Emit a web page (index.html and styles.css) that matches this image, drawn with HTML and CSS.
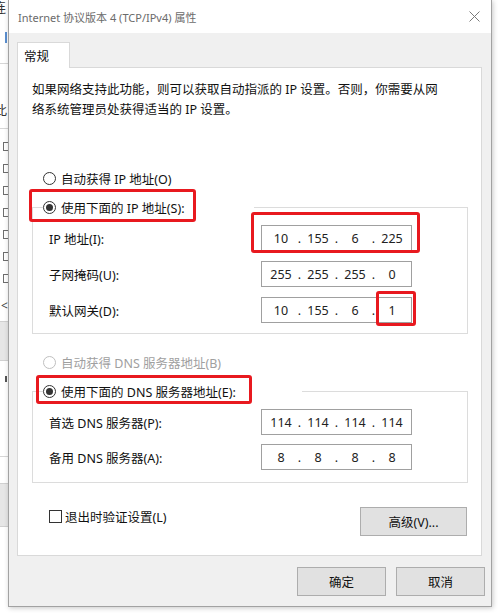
FILE: index.html
```html
<!DOCTYPE html>
<html lang="zh-CN">
<head>
<meta charset="utf-8">
<title>Internet 协议版本 4 (TCP/IPv4) 属性</title>
<link rel="stylesheet" href="styles.css">
</head>
<body>
<div class="bg-strip">
  <div class="s-glyph g1">连</div>
  <div class="s-blue"></div>
  <div class="s-line l1"></div>
  <div class="s-glyph g2">此</div>
  <div class="s-line l2"></div>
  <div class="s-check"></div>
  <div class="s-check"></div>
  <div class="s-check"></div>
  <div class="s-check"></div>
  <div class="s-check"></div>
  <div class="s-check"></div>
  <div class="s-check"></div>
  <div class="s-arrow">&lt;</div>
  <div class="s-gray g-a"></div>
  <div class="s-mark"></div>
  <div class="s-line l3"></div>
  <div class="s-gray g-b"></div>
</div>

<div class="dialog">
  <div class="titlebar">
    <span class="title">Internet 协议版本 4 (TCP/IPv4) 属性</span>
    <svg class="close" width="11" height="11" viewBox="0 0 11 11"><path d="M0.5 0.5 L10.5 10.5 M10.5 0.5 L0.5 10.5" stroke="#7a7a7a" stroke-width="1" fill="none"/></svg>
  </div>
  <div class="body">
    <div class="tab">常规</div>
    <div class="panel">
      <div class="desc">
        <span class="line">如果网络支持此功能，则可以获取自动指派的 IP 设置。否则，你需要从网</span>
        <span class="line">络系统管理员处获得适当的 IP 设置。</span>
      </div>

      <div class="radio-row first"><span class="radio"></span><span>自动获得 IP 地址(O)</span></div>

      <fieldset class="group">
        <legend class="legend ip-legend"><span class="radio-row"><span class="radio on"></span><span>使用下面的 IP 地址(S):</span></span></legend>
        <div class="fields">
          <span class="label">IP 地址(I):</span>
          <div class="ipbox"><span>10</span><span>.</span><span>155</span><span>.</span><span>6</span><span>.</span><span>225</span></div>
          <span class="label">子网掩码(U):</span>
          <div class="ipbox"><span>255</span><span>.</span><span>255</span><span>.</span><span>255</span><span>.</span><span>0</span></div>
          <span class="label">默认网关(D):</span>
          <div class="ipbox"><span>10</span><span>.</span><span>155</span><span>.</span><span>6</span><span>.</span><span>1</span></div>
        </div>
      </fieldset>

      <div class="radio-row dns-auto disabled"><span class="radio"></span><span>自动获得 DNS 服务器地址(B)</span></div>

      <fieldset class="group dns">
        <legend class="legend dns-legend"><span class="radio-row"><span class="radio on"></span><span>使用下面的 DNS 服务器地址(E):</span></span></legend>
        <div class="fields">
          <span class="label">首选 DNS 服务器(P):</span>
          <div class="ipbox"><span>114</span><span>.</span><span>114</span><span>.</span><span>114</span><span>.</span><span>114</span></div>
          <span class="label">备用 DNS 服务器(A):</span>
          <div class="ipbox"><span>8</span><span>.</span><span>8</span><span>.</span><span>8</span><span>.</span><span>8</span></div>
        </div>
      </fieldset>

      <div class="options">
        <label class="check-row"><span class="checkbox"></span><span>退出时验证设置(L)</span></label>
        <button class="btn adv">高级(V)...</button>
      </div>

      <div class="mark m1"></div>
      <div class="mark m2"></div>
      <div class="mark m3"></div>
      <div class="mark m4"></div>
    </div>
    <div class="footer">
      <button class="btn">确定</button>
      <button class="btn">取消</button>
    </div>
  </div>
</div>
</body>
</html>
```

FILE: styles.css
```css
html, body {
  margin: 0;
  padding: 0;
}
body {
  width: 500px;
  height: 614px;
  overflow: hidden;
  background: #ffffff;
  display: flex;
  align-items: flex-start;
  font-family: "Noto Sans", "Noto Sans CJK SC", sans-serif;
  font-size: 12.5px;
  color: #111111;
}

/* background window strip */
.bg-strip {
  width: 8px;
  height: 614px;
  flex: none;
  overflow: hidden;
  background: #ffffff;
  display: flex;
  flex-direction: column;
}
.s-glyph {
  height: 14px;
  line-height: 14px;
  font-size: 13px;
  margin-left: -7px;
  color: #333;
  white-space: nowrap;
}
.s-blue {
  width: 2px;
  height: 11px;
  margin: 18px 0 0 5px;
  background: #5b8fd0;
}
.s-line {
  height: 1px;
  background: #d6d6d6;
}
.l1 { margin-top: 20px; }
.g2 { margin-top: 39px; margin-left: -6px; }
.l2 { margin-top: 11px; }
.s-check {
  width: 5px;
  height: 7px;
  margin: 13px 0 0 3px;
  border: 1px solid #6d6d6d;
  border-right: none;
  flex: none;
}
.s-check:first-of-type { margin-top: 11px; }
.s-arrow {
  height: 14px;
  line-height: 14px;
  margin: 16px 0 0 1px;
  font-size: 12px;
  color: #444;
}
.s-gray {
  background: #e6e6e6;
  border-top: 1px solid #d0d0d0;
  border-bottom: 1px solid #d0d0d0;
}
.g-a { height: 38px; margin-top: 8px; }
.s-mark {
  width: 2px;
  height: 6px;
  margin: 15px 0 0 5px;
  background: #555;
}
.l3 { margin-top: 74px; }
.g-b { height: 42px; margin-top: 26px; }

/* dialog */
.dialog {
  width: 484px;
  height: 607px;
  flex: none;
  box-sizing: border-box;
  border: 1px solid #a2a2a2;
  border-top: none;
  background: #f0f0f0;
  box-shadow: 1px 1px 5px rgba(0, 0, 0, 0.22);
  display: flex;
  flex-direction: column;
  position: relative;
  z-index: 1;
}
.titlebar {
  height: 33px;
  flex: none;
  background: #ffffff;
  display: flex;
  align-items: center;
  justify-content: space-between;
  padding: 0 11px 0 9px;
}
.title {
  color: #6b6b6b;
  font-size: 11px;
  white-space: nowrap;
}
.close { display: block; }

.body {
  flex: 1;
  padding: 9px 6px 0 8px;
  display: flex;
  flex-direction: column;
}
.tab {
  width: 53px;
  height: 26px;
  box-sizing: border-box;
  border: 1px solid #d9d9d9;
  border-bottom: none;
  background: #ffffff;
  margin-bottom: -1px;
  padding-left: 6px;
  display: flex;
  align-items: center;
  position: relative;
  z-index: 2;
}
.panel {
  width: 465px;
  height: 489px;
  box-sizing: border-box;
  border: 1px solid #d9d9d9;
  background: #ffffff;
  padding: 12px 13px 0 14px;
  position: relative;
}
.desc .line {
  display: block;
  line-height: 20px;
  white-space: nowrap;
}

.radio-row {
  display: flex;
  align-items: center;
  gap: 5px;
  height: 20px;
  white-space: nowrap;
}
.radio-row.first { margin-top: 48px; padding-left: 11px; }
.radio-row.dns-auto { margin-top: 18px; padding-left: 11px; }
.disabled { color: #a0a0a0; }
.radio {
  width: 13px;
  height: 13px;
  box-sizing: border-box;
  border: 1px solid #333333;
  border-radius: 50%;
  background: #ffffff;
  flex: none;
  display: flex;
  align-items: center;
  justify-content: center;
}
.disabled .radio { border-color: #bfbfbf; }
.radio.on::after {
  content: "";
  width: 7px;
  height: 7px;
  border-radius: 50%;
  background: #333333;
}

.group {
  margin: 9px 0 0 0;
  padding: 8px 0 10px 10px;
  border: 1px solid #dcdcdc;
  min-width: 0;
}
.group.dns { padding-bottom: 12px; }
.legend {
  padding: 0;
  height: 20px;
}
.ip-legend { width: 211px; }
.dns-legend { width: 259px; }

.fields {
  margin-left: 6px;
  display: grid;
  grid-template-columns: 212px 151px;
  grid-auto-rows: 26px;
  row-gap: 10px;
  align-items: center;
}
.dns .fields { row-gap: 9px; }
.label { white-space: nowrap; }
.ipbox {
  height: 26px;
  box-sizing: border-box;
  border: 1px solid #a0a0a0;
  background: #ffffff;
  padding-left: 4px;
  display: grid;
  grid-template-columns: 30px 7px 30px 7px 30px 7px 30px;
  align-items: center;
  text-align: center;
  color: #222222;
}

.options {
  margin-top: 24px;
  padding: 0 1px 0 17px;
  display: flex;
  justify-content: space-between;
  align-items: flex-start;
}
.check-row {
  height: 18px;
  display: flex;
  align-items: center;
  gap: 3px;
  white-space: nowrap;
}
.checkbox {
  width: 13px;
  height: 13px;
  box-sizing: border-box;
  border: 1px solid #333333;
  background: #ffffff;
  flex: none;
}
.btn {
  width: 89px;
  height: 29px;
  box-sizing: border-box;
  border: 1px solid #adadad;
  background: #e1e1e1;
  font-family: "Noto Sans", "Noto Sans CJK SC", sans-serif;
  font-size: 12.5px;
  color: #111111;
  padding: 0;
  margin: 0;
}
.btn.adv { width: 107px; }
.footer {
  margin-top: 11px;
  display: flex;
  justify-content: flex-end;
  gap: 10px;
}

/* red annotation boxes drawn over the dialog */
.mark {
  position: absolute;
  box-sizing: border-box;
  border: 3px solid #e8191f;
  border-radius: 3px;
  pointer-events: none;
}
.m1 { left: 11px; top: 121px; width: 167px; height: 33px; }
.m2 { left: 233px; top: 144px; width: 169px; height: 41px; }
.m3 { left: 358px; top: 223px; width: 40px; height: 35px; }
.m4 { left: 18px; top: 307px; width: 216px; height: 29px; }
```
